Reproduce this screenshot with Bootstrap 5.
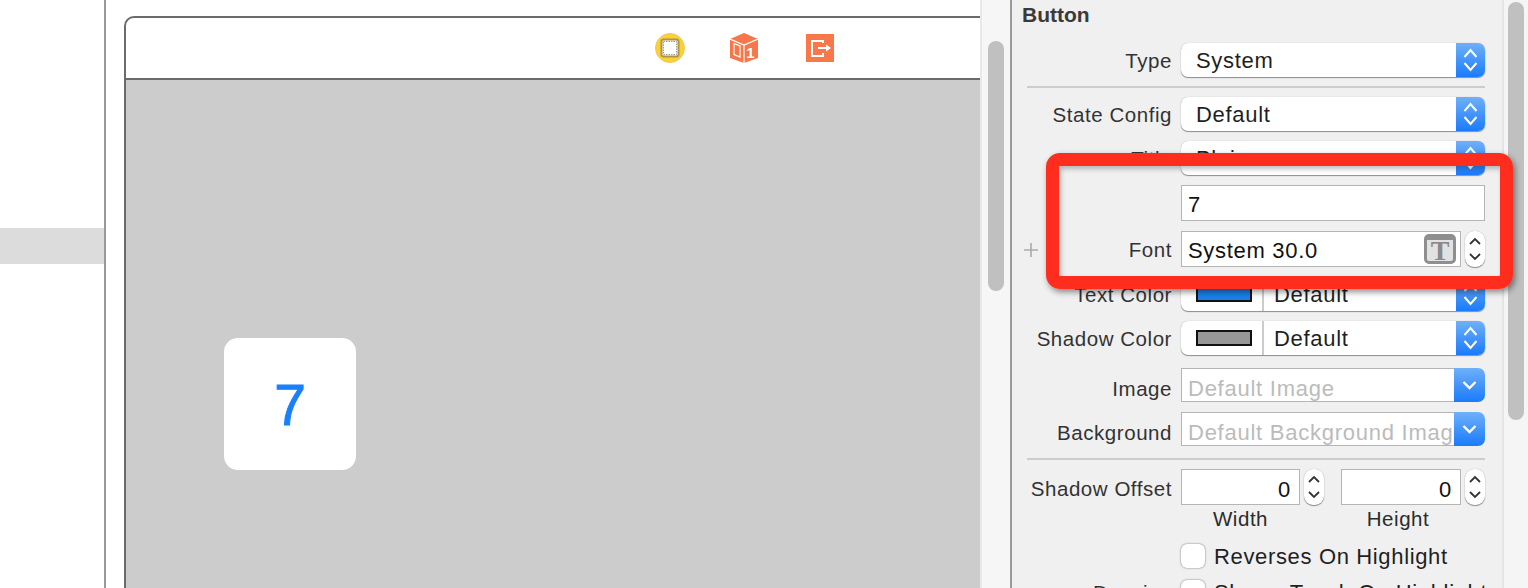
<!DOCTYPE html>
<html lang="en">
<head>
    <meta charset="UTF-8">
    <meta name="viewport" content="width=device-width, initial-scale=1">
    <title>Button Attributes</title>
    <link href="https://cdn.jsdelivr.net/npm/bootstrap@5.3.0/dist/css/bootstrap.min.css" rel="stylesheet">
    <style>
        html, body { height: 588px; overflow: hidden; }
        body { font-family: "Liberation Sans", Arial, sans-serif; background: #fff; color: #2b2b2b; }

        .workspace { height: 588px; }
        .outline-pane { width: 106px; border-right: 2px solid #9a9a9a; padding-top: 228px; }
        .outline-selected { height: 36px; background: #dcdcdc; }

        .canvas-pane { width: 874px; padding: 16px 0 0 18px; overflow: hidden; }
        .device-frame { width: 1000px; height: 700px; border: 2px solid #6b6b6b; border-radius: 10px 10px 0 0; overflow: hidden; }
        .device-header { height: 62px; border-bottom: 2px solid #6b6b6b; padding: 0 0 0 529px; }
        .icon-gap-a { margin-right: 45px; }
        .icon-gap-b { margin-right: 48px; }
        .device-body { height: 640px; background: #ccc; padding: 258px 0 0 98px; }
        .key-button { width: 132px; height: 132px; padding-top: 3px; border-radius: 14px; background: #fff; color: #1a7ffb; font-size: 57px; line-height: 1; -webkit-text-stroke: 1px #1a7ffb; }

        .mid-scroller { width: 30px; background: #f6f6f6; border-left: 2px solid #e8e8e8; padding: 41px 0 0 6px; }
        .scroll-thumb { width: 16px; border-radius: 8px; background: #c0c0c0; }
        .thumb-mid { height: 250px; }
        .thumb-side { height: 418px; }

        .inspector { width: 492px; background: #f0f0f0; border-left: 2px solid #9a9a9a; font-size: 21px; }
        .inspector-title { height: 30px; padding-left: 10px; font-size: 21px; font-weight: 700; color: #3a3a3a; line-height: 30px; }
        .prop-row { height: 34px; margin-top: 10px; }
        .prop-tall { height: 36px; }
        .row-gap-lg { margin-top: 13px; }
        .row-gap-none { margin-top: 0; }
        .prop-label { width: 160px; margin-right: 9px; padding-left: 12px; padding-top: 2px; color: #333; font-size: 20.5px; white-space: nowrap; letter-spacing: .55px; }
        .label-low { padding-top: 8px; }
        .label-mid { padding-top: 4px; }
        .prop-value { width: 304px; height: 100%; }
        .prop-rule { height: 2px; margin: 9px 17px 9px 15px; width: 458px; background: #ccc; }
        .rule-low { margin-top: 12px; }

        .mac-select { background: #fff; border-radius: 7px; box-shadow: 0 1px 1px rgba(0,0,0,.4), 0 0 1px rgba(0,0,0,.3); overflow: hidden; }
        .mac-select-text { padding-left: 15px; color: #1f1f1f; letter-spacing: .7px; font-size: 22px; }
        .well-text { padding-left: 10px; }
        .mac-cap { width: 29px; height: 100%; background: linear-gradient(#6fb0f9, #1a7bfb); }
        .mac-field { background: #fff; border: 1px solid #b5b5b5; padding: 2px 6px 0; color: #111; font-size: 22px; letter-spacing: .7px; height: 100%; }
        .mac-stepper { width: 20px; height: 36px; background: #fff; border-radius: 9px; box-shadow: 0 1px 1px rgba(0,0,0,.4), 0 0 1px rgba(0,0,0,.3); color: #333; }
        .font-btn { width: 32px; height: 30px; margin-top: -2px; border: 3px solid #8f8f8f; border-top-width: 6px; border-radius: 5px; background: #e2e2e2; color: #8a8a8a; font-family: "Liberation Serif", serif; font-weight: 700; font-size: 28px; line-height: 21px; letter-spacing: 0; }

        .well-swatch { width: 83px; height: 100%; border-right: 2px solid #ccc; padding-left: 15px; }
        .well-fill { width: 56px; height: 16px; border: 2px solid #111; }
        .well-blue { background: #1a80e8; }
        .well-gray { background: #979797; }
        .combo { width: 273px; background: #fff; border: 1px solid #b5b5b5; border-right: 0; color: #bbb; font-size: 22px; letter-spacing: .75px; overflow: hidden; white-space: nowrap; padding: 6px 0 0 6px; }
        .combo-cap { width: 31px; height: 100%; background: linear-gradient(#6fb0f9, #1a7bfb); border-radius: 0 7px 7px 0; }

        .num-field { width: 119px; text-align: right; padding-right: 8px; padding-top: 3px; }
        .num-gap { margin-right: 4px; }
        .num-second { margin-left: 17px; width: 120px; }
        .sub-label { height: 28px; padding-left: 169px; font-size: 20.5px; letter-spacing: .55px; }
        .sub-width { width: 119px; text-align: center; }
        .sub-height { width: 196px; text-align: center; }
        .check-row { height: 24px; margin-top: 11px; }
        .check-next { margin-top: 12px; }
        .mac-check { width: 24px; height: 24px; margin-right: 9px; background: #fff; border-radius: 6px; box-shadow: 0 0 2px rgba(0,0,0,.6); flex: none; }
        .check-text { font-size: 22px; letter-spacing: .65px; color: #1f1f1f; white-space: nowrap; }

        .side-scroller { width: 26px; background: #f5f5f5; border-left: 2px solid #e4e4e4; padding: 2px 0 0 4px; }

        .callout { position: absolute; left: 1046px; top: 153px; width: 467px; height: 136px; border: 13px solid #ff2d1e; border-radius: 14px; box-shadow: 2px 3px 6px rgba(0,0,0,.45), inset 2px 3px 5px rgba(0,0,0,.25); }
    </style>
</head>
<body>

<svg width="0" height="0" class="position-absolute">
    <symbol id="updown" viewBox="0 0 29 34">
        <path d="M8.500 14l6-7 6 7M8.500 20l6 7 6-7" fill="none" stroke="currentColor" stroke-width="2"/>
    </symbol>
    <symbol id="stepper" viewBox="0 0 20 36">
        <path d="M5 13l5-5 5 5M5 23l5 5 5-5" fill="none" stroke="currentColor" stroke-width="1.800"/>
    </symbol>
    <symbol id="down" viewBox="0 0 31 34">
        <path d="M9.500 14l6 6 6-6" fill="none" stroke="currentColor" stroke-width="2.400"/>
    </symbol>
</svg>

<div class="workspace d-flex">
    <div class="outline-pane flex-shrink-0">
        <div class="outline-selected"></div>
    </div>

    <div class="canvas-pane flex-shrink-0">
        <div class="device-frame">
            <div class="device-header d-flex align-items-center">
                <svg width="30" height="30" viewBox="0 0 30 30" class="icon-gap-a">
                    <circle cx="15" cy="15" r="14.500" fill="#fdd02f" stroke="#f0c56a"/>
                    <rect x="6.500" y="6.500" width="17" height="17" rx="2" fill="#fff" stroke="#a8955a" stroke-width="2"/>
                    <rect x="8.500" y="8.500" width="13" height="13" fill="none" stroke="#a99c74" stroke-dasharray="1.500 1"/>
                </svg>
                <svg width="28" height="32" viewBox="0 0 28 32" class="icon-gap-b">
                    <path d="M14 1l14 6v19l-14 5-14-5V7z" fill="#f6774a"/>
                    <path d="M0 7l14 6 14-6M14 13v18" fill="none" stroke="#fff" stroke-width="1.200"/>
                    <path d="M4 11.500l6 2.500v11l-6-2.500z" fill="none" stroke="#fff" stroke-width="1.200"/>
                    <text x="20.500" y="26" fill="#fff" font-family="Liberation Sans" font-size="15" font-weight="700" text-anchor="middle">1</text>
                </svg>
                <svg width="28" height="28" viewBox="0 0 28 28">
                    <rect width="28" height="28" fill="#f9784a"/>
                    <path d="M17 9V7H6v15h11v-3" fill="none" stroke="#fff" stroke-width="2"/>
                    <path d="M12 14h10" stroke="#fff" stroke-width="2"/>
                    <path d="M20 10.500l5 3.500-5 3.500z" fill="#fff"/>
                </svg>
            </div>
            <div class="device-body">
                <div class="key-button d-flex align-items-center justify-content-center">7</div>
            </div>
        </div>
    </div>

    <div class="mid-scroller flex-shrink-0">
        <div class="scroll-thumb thumb-mid"></div>
    </div>

    <div class="inspector flex-shrink-0">
        <div class="inspector-title">Button</div>

        <div class="prop-row row-gap-lg d-flex align-items-center">
            <div class="prop-label text-end">Type</div>
            <div class="prop-value mac-select d-flex align-items-center justify-content-between">
                <span class="mac-select-text">System</span>
                <div class="mac-cap text-white"><svg width="29" height="34"><use href="#updown"/></svg></div>
            </div>
        </div>
        <div class="prop-rule"></div>

        <div class="prop-row row-gap-none d-flex align-items-center">
            <div class="prop-label text-end">State Config</div>
            <div class="prop-value mac-select d-flex align-items-center justify-content-between">
                <span class="mac-select-text">Default</span>
                <div class="mac-cap text-white"><svg width="29" height="34"><use href="#updown"/></svg></div>
            </div>
        </div>

        <div class="prop-row d-flex align-items-center">
            <div class="prop-label text-end">Title</div>
            <div class="prop-value mac-select d-flex align-items-center justify-content-between">
                <span class="mac-select-text">Plain</span>
                <div class="mac-cap text-white"><svg width="29" height="34"><use href="#updown"/></svg></div>
            </div>
        </div>

        <div class="prop-row prop-tall d-flex align-items-center">
            <div class="prop-label"></div>
            <div class="prop-value mac-field d-flex align-items-center">7</div>
        </div>

        <div class="prop-row prop-tall d-flex align-items-center">
            <div class="prop-label d-flex justify-content-between align-items-center">
                <svg width="14" height="14" viewBox="0 0 14 14"><path d="M7 0v14M0 7h14" stroke="#aaa" stroke-width="1.600"/></svg>
                <span>Font</span>
            </div>
            <div class="prop-value d-flex align-items-center justify-content-between">
                <div class="mac-field d-flex align-items-center justify-content-between flex-grow-1 pe-1">
                    <span>System 30.0</span>
                    <div class="font-btn d-flex justify-content-center">T</div>
                </div>
                <div class="mac-stepper ms-1 flex-shrink-0"><svg width="20" height="36"><use href="#stepper"/></svg></div>
            </div>
        </div>

        <div class="prop-row d-flex align-items-center">
            <div class="prop-label text-end">Text Color</div>
            <div class="prop-value mac-select d-flex align-items-center">
                <div class="well-swatch d-flex align-items-center"><div class="well-fill well-blue"></div></div>
                <span class="mac-select-text well-text flex-grow-1">Default</span>
                <div class="mac-cap text-white"><svg width="29" height="34"><use href="#updown"/></svg></div>
            </div>
        </div>

        <div class="prop-row d-flex align-items-center">
            <div class="prop-label text-end">Shadow Color</div>
            <div class="prop-value mac-select d-flex align-items-center">
                <div class="well-swatch d-flex align-items-center"><div class="well-fill well-gray"></div></div>
                <span class="mac-select-text well-text flex-grow-1">Default</span>
                <div class="mac-cap text-white"><svg width="29" height="34"><use href="#updown"/></svg></div>
            </div>
        </div>

        <div class="prop-row row-gap-lg d-flex align-items-center">
            <div class="prop-label label-low text-end">Image</div>
            <div class="prop-value d-flex">
                <div class="combo flex-grow-1 d-flex align-items-center">Default Image</div>
                <div class="combo-cap text-white flex-shrink-0"><svg width="31" height="34"><use href="#down"/></svg></div>
            </div>
        </div>

        <div class="prop-row d-flex align-items-center">
            <div class="prop-label label-low text-end">Background</div>
            <div class="prop-value d-flex">
                <div class="combo flex-grow-1 d-flex align-items-center">Default Background Image</div>
                <div class="combo-cap text-white flex-shrink-0"><svg width="31" height="34"><use href="#down"/></svg></div>
            </div>
        </div>

        <div class="prop-rule rule-low"></div>

        <div class="prop-row prop-tall row-gap-none d-flex align-items-center">
            <div class="prop-label label-mid text-end">Shadow Offset</div>
            <div class="prop-value d-flex align-items-center">
                <div class="mac-field num-field num-gap">0</div>
                <div class="mac-stepper flex-shrink-0"><svg width="20" height="36"><use href="#stepper"/></svg></div>
                <div class="mac-field num-field num-second num-gap">0</div>
                <div class="mac-stepper flex-shrink-0"><svg width="20" height="36"><use href="#stepper"/></svg></div>
            </div>
        </div>

        <div class="sub-label d-flex align-items-center">
            <div class="sub-width">Width</div>
            <div class="sub-height">Height</div>
        </div>

        <div class="check-row d-flex align-items-center">
            <div class="prop-label"></div>
            <div class="mac-check"></div>
            <div class="check-text">Reverses On Highlight</div>
        </div>

        <div class="check-row check-next d-flex align-items-center">
            <div class="prop-label text-end">Drawing</div>
            <div class="mac-check"></div>
            <div class="check-text">Shows Touch On Highlight</div>
        </div>
    </div>

    <div class="side-scroller flex-grow-1">
        <div class="scroll-thumb thumb-side"></div>
    </div>
</div>

<div class="callout"></div>

</body>
</html>
